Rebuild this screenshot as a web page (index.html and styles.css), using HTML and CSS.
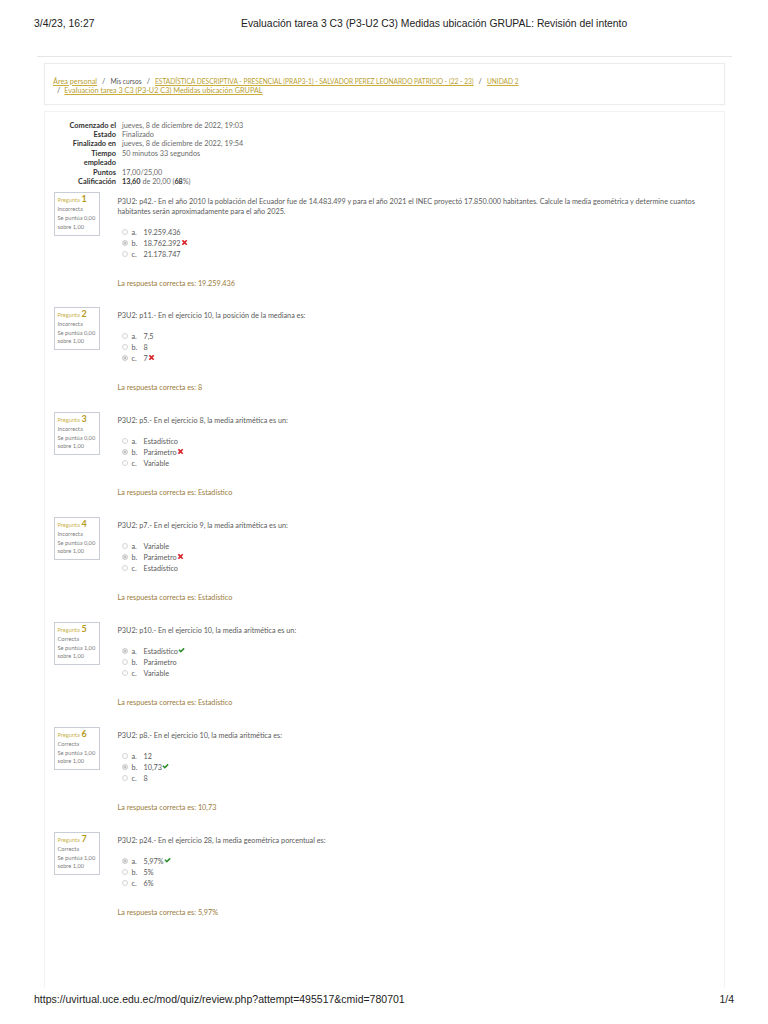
FILE: index.html
```html
<!DOCTYPE html>
<html lang="es">
<head>
<meta charset="utf-8">
<title>Evaluación tarea 3 C3 (P3-U2 C3) Medidas ubicación GRUPAL: Revisión del intento</title>
<link rel="stylesheet" href="styles.css">
</head>
<body>
<svg class="defs" width="0" height="0" aria-hidden="true">
  <symbol id="wrong" viewBox="0 0 10 10"><path d="M1 2.6 2.8 1 5 3.2 7.4 1 9 2.6 6.6 5 9 7.4 7.4 9 5 6.8 2.8 9 1 7.4 3.4 5z" fill="#d9252b"/></symbol>
  <symbol id="right" viewBox="0 0 10 10"><path d="M.5 4.6 2 3.1 4 5 8 1.2 9.6 2.7 4 8.2z" fill="#2f8f2f"/></symbol>
</svg>
<div class="page">
  <header class="print-head">
    <span class="date">3/4/23, 16:27</span>
    <span class="title">Evaluación tarea 3 C3 (P3-U2 C3) Medidas ubicación GRUPAL: Revisión del intento</span>
  </header>
  <div class="sheet">
    <nav class="crumbs">
      <a href="#">Área personal</a><span class="sep">/</span><span class="plain">Mis cursos</span><span class="sep">/</span><a class="caps" href="#">ESTADÍSTICA DESCRIPTIVA - PRESENCIAL (PRAP3-1) - SALVADOR PEREZ LEONARDO PATRICIO - (22 - 23)</a><span class="sep">/</span><a class="caps" href="#">UNIDAD 2</a><br>
      <span class="sep first">/</span><a href="#">Evaluación tarea 3 C3 (P3-U2 C3) Medidas ubicación GRUPAL</a>
    </nav>
    <main class="review">
      <dl class="summary">
        <dt>Comenzado el</dt><dd>jueves, 8 de diciembre de 2022, 19:03</dd>
        <dt>Estado</dt><dd>Finalizado</dd>
        <dt>Finalizado en</dt><dd>jueves, 8 de diciembre de 2022, 19:54</dd>
        <dt>Tiempo empleado</dt><dd>50 minutos 33 segundos</dd>
        <dt>Puntos</dt><dd>17,00/25,00</dd>
        <dt>Calificación</dt><dd><b>13,60</b> de 20,00 (<b>68</b>%)</dd>
      </dl>

      <section class="q q1">
        <div class="info"><p class="no">Pregunta <b>1</b></p><p class="state">Incorrecta</p><p class="grade">Se puntúa 0,00 sobre 1,00</p></div>
        <div class="body">
          <p class="text">P3U2: p42.- En el año 2010 la población del Ecuador fue de 14.483.499 y para el año 2021 el INEC proyectó 17.850.000 habitantes. Calcule la media geométrica y determine cuantos habitantes serán aproximadamente para el año 2025.</p>
          <ul class="opts">
            <li><i class="radio"></i><span class="let">a.</span>19.259.436</li>
            <li><i class="radio on"></i><span class="let">b.</span>18.762.392<svg class="mark"><use href="#wrong"/></svg></li>
            <li><i class="radio"></i><span class="let">c.</span>21.178.747</li>
          </ul>
          <p class="answer">La respuesta correcta es: 19.259.436</p>
        </div>
      </section>

      <section class="q q2">
        <div class="info"><p class="no">Pregunta <b>2</b></p><p class="state">Incorrecta</p><p class="grade">Se puntúa 0,00 sobre 1,00</p></div>
        <div class="body">
          <p class="text">P3U2: p11.- En el ejercicio 10, la posición de la mediana es:</p>
          <ul class="opts">
            <li><i class="radio"></i><span class="let">a.</span>7,5</li>
            <li><i class="radio"></i><span class="let">b.</span>8</li>
            <li><i class="radio on"></i><span class="let">c.</span>7<svg class="mark"><use href="#wrong"/></svg></li>
          </ul>
          <p class="answer">La respuesta correcta es: 8</p>
        </div>
      </section>

      <section class="q">
        <div class="info"><p class="no">Pregunta <b>3</b></p><p class="state">Incorrecta</p><p class="grade">Se puntúa 0,00 sobre 1,00</p></div>
        <div class="body">
          <p class="text">P3U2: p5.- En el ejercicio 8, la media aritmética es un:</p>
          <ul class="opts">
            <li><i class="radio"></i><span class="let">a.</span>Estadístico</li>
            <li><i class="radio on"></i><span class="let">b.</span>Parámetro<svg class="mark"><use href="#wrong"/></svg></li>
            <li><i class="radio"></i><span class="let">c.</span>Variable</li>
          </ul>
          <p class="answer">La respuesta correcta es: Estadístico</p>
        </div>
      </section>

      <section class="q">
        <div class="info"><p class="no">Pregunta <b>4</b></p><p class="state">Incorrecta</p><p class="grade">Se puntúa 0,00 sobre 1,00</p></div>
        <div class="body">
          <p class="text">P3U2: p7.- En el ejercicio 9, la media aritmética es un:</p>
          <ul class="opts">
            <li><i class="radio"></i><span class="let">a.</span>Variable</li>
            <li><i class="radio on"></i><span class="let">b.</span>Parámetro<svg class="mark"><use href="#wrong"/></svg></li>
            <li><i class="radio"></i><span class="let">c.</span>Estadístico</li>
          </ul>
          <p class="answer">La respuesta correcta es: Estadístico</p>
        </div>
      </section>

      <section class="q">
        <div class="info"><p class="no">Pregunta <b>5</b></p><p class="state">Correcta</p><p class="grade">Se puntúa 1,00 sobre 1,00</p></div>
        <div class="body">
          <p class="text">P3U2: p10.- En el ejercicio 10, la media aritmética es un:</p>
          <ul class="opts">
            <li><i class="radio on"></i><span class="let">a.</span>Estadístico<svg class="mark"><use href="#right"/></svg></li>
            <li><i class="radio"></i><span class="let">b.</span>Parámetro</li>
            <li><i class="radio"></i><span class="let">c.</span>Variable</li>
          </ul>
          <p class="answer">La respuesta correcta es: Estadístico</p>
        </div>
      </section>

      <section class="q">
        <div class="info"><p class="no">Pregunta <b>6</b></p><p class="state">Correcta</p><p class="grade">Se puntúa 1,00 sobre 1,00</p></div>
        <div class="body">
          <p class="text">P3U2: p8.- En el ejercicio 10, la media aritmética es:</p>
          <ul class="opts">
            <li><i class="radio"></i><span class="let">a.</span>12</li>
            <li><i class="radio on"></i><span class="let">b.</span>10,73<svg class="mark"><use href="#right"/></svg></li>
            <li><i class="radio"></i><span class="let">c.</span>8</li>
          </ul>
          <p class="answer">La respuesta correcta es: 10,73</p>
        </div>
      </section>

      <section class="q">
        <div class="info"><p class="no">Pregunta <b>7</b></p><p class="state">Correcta</p><p class="grade">Se puntúa 1,00 sobre 1,00</p></div>
        <div class="body">
          <p class="text">P3U2: p24.- En el ejercicio 28, la media geométrica porcentual es:</p>
          <ul class="opts">
            <li><i class="radio on"></i><span class="let">a.</span>5,97%<svg class="mark"><use href="#right"/></svg></li>
            <li><i class="radio"></i><span class="let">b.</span>5%</li>
            <li><i class="radio"></i><span class="let">c.</span>6%</li>
          </ul>
          <p class="answer">La respuesta correcta es: 5,97%</p>
        </div>
      </section>
    </main>
  </div>
  <footer class="print-foot">
    <span>https://uvirtual.uce.edu.ec/mod/quiz/review.php?attempt=495517&amp;cmid=780701</span>
    <span>1/4</span>
  </footer>
</div>
</body>
</html>
```
FILE: styles.css
```css
* { box-sizing: border-box; }
html, body { margin: 0; padding: 0; background: #fff; }
.defs { display: block; height: 0; }
.page { width: 768px; height: 1024px; display: flex; flex-direction: column; overflow: hidden; font-family: Lato, "Open Sans", sans-serif; font-size: 7.25px; color: #5a5a5a; }
.print-head { height: 56px; flex: none; padding: 17px 34px 0 34px; display: flex; font-family: "Liberation Sans", Arial, sans-serif; font-size: 10.35px; line-height: 13px; color: #222; }
.date { width: 207px; }
.sheet { margin: 0 36px 0 37px; flex: none; height: 932px; border-top: 1px solid #e6e6e6; padding: 6px 7px 0 7px; overflow: hidden; display: flex; flex-direction: column; gap: 6px; }
.crumbs { flex: none; height: 42px; border: 1px solid #ececec; box-shadow: 0 0 1px #eee; padding: 12.5px 8px 0 8px; line-height: 9.8px; font-size: 7.3px; color: #555; }
.crumbs a { color: #b9a02e; text-decoration: underline; text-decoration-color: #c9ae3c; }
.crumbs a.caps { font-size: 6.6px; }
.crumbs .plain { font-size: 6.7px; }
.sep { margin: 0 5px; }
.sep.first { margin-left: 4px; margin-right: 4px; }
.review { flex: 1; border: 1px solid #f2f2f2; border-bottom: 0; padding: 8.5px 0 0 8.5px; }
.summary { margin: 0; display: grid; grid-template-columns: 54px 1fr; column-gap: 6px; padding-left: 8.5px; line-height: 9.4px; color: #6a6a6a; }
.summary dt { font-weight: 700; font-size: 7.4px; color: #333; text-align: right; }
.summary dd { margin: 0; }
.summary b { color: #333; }
.q { display: flex; height: 105px; }
.q1 { height: 114.5px; margin-top: 6px; }
.info { flex: none; width: 46.5px; height: 43.4px; border: 1px solid #c9ced6; padding: 2px 2px 0 3px; font-size: 5.7px; line-height: 8.4px; color: #7d7d7d; }
.info p { margin: 0; }
.no { color: #c8b24a; height: 10px; }
.no b { font-size: 9px; color: #b59a1a; }
.state { height: 9px; }
.body { margin-left: 17.5px; padding-top: 4.5px; width: 600px; }
.text { margin: 0; line-height: 10.5px; }
.opts { list-style: none; margin: 9px 0 0 0; padding: 0 0 0 4px; }
.opts li { display: flex; align-items: center; height: 11px; }
.radio { width: 6px; height: 6px; border: 1px solid #d4d4d4; border-radius: 50%; margin-right: 4px; flex: none; background: #fff; }
.radio.on { background: #b4b4b4; box-shadow: inset 0 0 0 1px #eee; }
.let { width: 12px; flex: none; }
.mark { width: 7px; height: 7px; flex: none; margin-bottom: 2px; }
.answer { margin: 19px 0 0 0; color: #9a7b3c; line-height: 10px; }
.print-foot { flex: none; padding: 4.5px 34px 0 34px; display: flex; justify-content: space-between; font-family: "Liberation Sans", Arial, sans-serif; font-size: 10.5px; line-height: 13px; color: #222; }
```
